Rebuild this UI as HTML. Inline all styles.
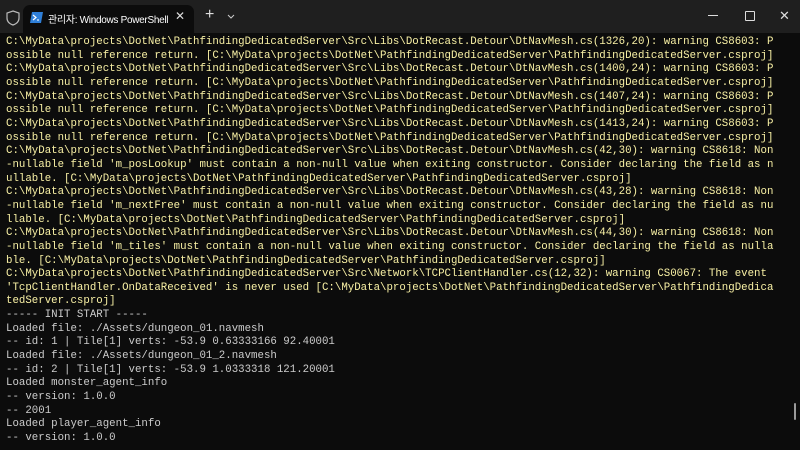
<!DOCTYPE html>
<html><head><meta charset="utf-8"><style>
html,body{margin:0;padding:0;width:800px;height:450px;overflow:hidden;background:#0c0c0c}
.bar{position:absolute;left:0;top:0;width:800px;height:33px;background:#1f1f1f}
.tab{position:absolute;left:23px;top:5px;width:171px;height:28px;background:#0c0c0c;border-radius:7px 7px 0 0}
.t{position:absolute;font-family:"Liberation Sans","Noto Sans CJK KR",sans-serif;font-size:10px;color:#fff}
pre{position:absolute;left:6px;top:36px;margin:0;font-family:"Liberation Mono",monospace;font-size:10.85px;line-height:13.66px;color:#cccccc;white-space:pre;transform:scaleX(0.991);transform-origin:0 0}
.y{color:#f9f1a5}
.sb{position:absolute;left:794px;top:403px;width:2px;height:17px;background:#9a9a9a;border-radius:1px}
</style></head><body>
<div class="bar"></div>
<svg style="position:absolute;left:6px;top:10px" width="14" height="16"><path d="M7 1 L13 3 V8 C13 12 10 14 7 15 C4 14 1 12 1 8 V3 Z" fill="none" stroke="#bbb" stroke-width="1.2"/></svg>
<div class="tab"></div>
<svg style="position:absolute;left:30px;top:12px" width="13" height="11"><path d="M2 0 H13 L11 11 H0 Z" fill="#2f7fd8"/><path d="M3 3 L6 5.5 L3 8" stroke="#fff" stroke-width="1.2" fill="none"/><path d="M7 8 H9" stroke="#fff" stroke-width="1.1"/></svg>
<div class="t" style="left:48px;top:11px;letter-spacing:-0.3px">관리자: Windows PowerShell</div>
<div class="t" style="left:175px;top:9px;font-size:12px;color:#ddd">✕</div>
<div class="t" style="left:205px;top:6px;font-size:16px;color:#ddd">+</div>
<svg style="position:absolute;left:227px;top:14px" width="8" height="5"><path d="M1 1 L4 4 L7 1" stroke="#ccc" fill="none"/></svg>
<div style="position:absolute;left:708px;top:15px;width:10px;height:1px;background:#ddd"></div>
<div style="position:absolute;left:745px;top:11px;width:8px;height:8px;border:1px solid #ddd;border-radius:1px"></div>
<div class="t" style="left:779px;top:8px;font-size:13px;color:#ddd">✕</div>
<pre><span class="y">C:\MyData\projects\DotNet\PathfindingDedicatedServer\Src\Libs\DotRecast.Detour\DtNavMesh.cs(1326,20): warning CS8603: P
ossible null reference return. [C:\MyData\projects\DotNet\PathfindingDedicatedServer\PathfindingDedicatedServer.csproj]
C:\MyData\projects\DotNet\PathfindingDedicatedServer\Src\Libs\DotRecast.Detour\DtNavMesh.cs(1400,24): warning CS8603: P
ossible null reference return. [C:\MyData\projects\DotNet\PathfindingDedicatedServer\PathfindingDedicatedServer.csproj]
C:\MyData\projects\DotNet\PathfindingDedicatedServer\Src\Libs\DotRecast.Detour\DtNavMesh.cs(1407,24): warning CS8603: P
ossible null reference return. [C:\MyData\projects\DotNet\PathfindingDedicatedServer\PathfindingDedicatedServer.csproj]
C:\MyData\projects\DotNet\PathfindingDedicatedServer\Src\Libs\DotRecast.Detour\DtNavMesh.cs(1413,24): warning CS8603: P
ossible null reference return. [C:\MyData\projects\DotNet\PathfindingDedicatedServer\PathfindingDedicatedServer.csproj]
C:\MyData\projects\DotNet\PathfindingDedicatedServer\Src\Libs\DotRecast.Detour\DtNavMesh.cs(42,30): warning CS8618: Non
-nullable field 'm_posLookup' must contain a non-null value when exiting constructor. Consider declaring the field as n
ullable. [C:\MyData\projects\DotNet\PathfindingDedicatedServer\PathfindingDedicatedServer.csproj]
C:\MyData\projects\DotNet\PathfindingDedicatedServer\Src\Libs\DotRecast.Detour\DtNavMesh.cs(43,28): warning CS8618: Non
-nullable field 'm_nextFree' must contain a non-null value when exiting constructor. Consider declaring the field as nu
llable. [C:\MyData\projects\DotNet\PathfindingDedicatedServer\PathfindingDedicatedServer.csproj]
C:\MyData\projects\DotNet\PathfindingDedicatedServer\Src\Libs\DotRecast.Detour\DtNavMesh.cs(44,30): warning CS8618: Non
-nullable field 'm_tiles' must contain a non-null value when exiting constructor. Consider declaring the field as nulla
ble. [C:\MyData\projects\DotNet\PathfindingDedicatedServer\PathfindingDedicatedServer.csproj]
C:\MyData\projects\DotNet\PathfindingDedicatedServer\Src\Network\TCPClientHandler.cs(12,32): warning CS0067: The event
'TcpClientHandler.OnDataReceived' is never used [C:\MyData\projects\DotNet\PathfindingDedicatedServer\PathfindingDedica
tedServer.csproj]</span>
----- INIT START -----
Loaded file: ./Assets/dungeon_01.navmesh
-- id: 1 | Tile[1] verts: -53.9 0.63333166 92.40001
Loaded file: ./Assets/dungeon_01_2.navmesh
-- id: 2 | Tile[1] verts: -53.9 1.0333318 121.20001
Loaded monster_agent_info
-- version: 1.0.0
-- 2001
Loaded player_agent_info
-- version: 1.0.0</pre>
<div class="sb"></div>
</body></html>
